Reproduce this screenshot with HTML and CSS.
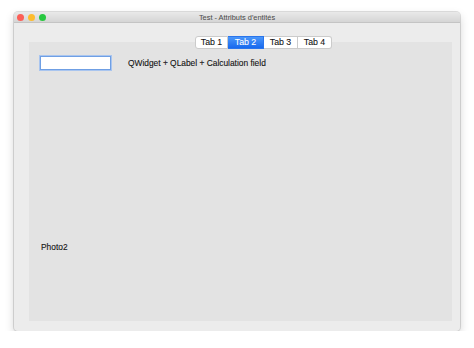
FILE: index.html
```html
<!DOCTYPE html>
<html lang="fr">
<head>
    <meta charset="UTF-8">
    <title>Test - Attributs d'entités</title>
    <link rel="stylesheet" href="styles.css">
</head>
<body>
    <div class="window">
        <div class="titlebar">
            <div class="lights">
                <span class="light red"></span>
                <span class="light yellow"></span>
                <span class="light green"></span>
            </div>
            <div class="title">Test - Attributs d'entités</div>
        </div>

        <div class="content">
            <div class="tabs">
                <button class="tab first">Tab 1</button>
                <button class="tab active">Tab 2</button>
                <button class="tab">Tab 3</button>
                <button class="tab last">Tab 4</button>
            </div>
            <div class="pane">
                <div class="row">
                    <input type="text" class="field">
                    <span class="label">QWidget + QLabel + Calculation field</span>
                </div>
                <div class="photo">Photo2</div>
            </div>
        </div>
    </div>
</body>
</html>
```

FILE: styles.css
```css
body {
    margin: 0;
    background: #ffffff;
    font-family: "Liberation Sans", Arial, sans-serif;
    color: #111111;
}
.window {
    margin: 12px 0 0 14px;
    width: 446px;
    height: 319px;
    background: #ececec;
    border-radius: 4px;
    box-shadow: 0 0 0 1px rgba(0,0,0,0.12), 0 4px 10px rgba(0,0,0,0.18);
    display: flex;
    flex-direction: column;
    overflow: hidden;
}
.titlebar {
    position: relative;
    height: 10px;
    background: linear-gradient(#e9e9e9, #d5d5d5);
    border-bottom: 1px solid #c4c4c4;
    display: flex;
    align-items: center;
    justify-content: center;
}
.lights {
    position: absolute;
    left: 3px;
    top: 0;
    bottom: 0;
    display: flex;
    align-items: center;
    gap: 4px;
}
.light {
    width: 7px;
    height: 7px;
    border-radius: 50%;
}
.red { background: #fc5f57; }
.yellow { background: #fdbc2e; }
.green { background: #28c840; }
.title {
    font-size: 7.4px;
    color: #4d4d4d;
    -webkit-text-stroke: 0.05px #4d4d4d;
}
.content {
    flex: 1;
    display: flex;
    flex-direction: column;
    padding: 13px 8px 10px 15px;
}
.tabs {
    display: flex;
    padding-left: 166px;
    position: relative;
    z-index: 1;
}
.tab {
    width: 34px;
    height: 13px;
    padding: 0;
    border: 1px solid #cbcbcb;
    border-left: none;
    background: #ffffff;
    font-family: inherit;
    font-size: 8.8px;
    color: #111;
    line-height: 11px;
    -webkit-text-stroke: 0.08px #111;
}
.tab.first {
    width: 33px;
    border-left: 1px solid #cbcbcb;
    border-radius: 3px 0 0 3px;
}
.tab.last {
    border-radius: 0 3px 3px 0;
}
.tab.active {
    width: 36px;
    background: linear-gradient(#4a97fa, #1869ee);
    border-color: #2a75ec;
    color: #ffffff;
    -webkit-text-stroke: 0.08px #ffffff;
}
.pane {
    flex: 1;
    margin-top: -7px;
    background: #e3e3e3;
    padding: 14px 11px;
}
.row {
    display: flex;
    align-items: center;
    gap: 17px;
}
.field {
    width: 71px;
    height: 14px;
    box-sizing: border-box;
    margin: 0;
    border: 1px solid #6f9fe4;
    box-shadow: 0 0 0 1px #a9c5ef;
    background: #ffffff;
    padding: 0;
}
.label {
    font-size: 8.4px;
    line-height: 10px;
    margin-top: -1px;
    -webkit-text-stroke: 0.1px #111;
}
.photo {
    margin-top: 172px;
    padding-left: 1px;
    font-size: 8.4px;
    line-height: 10px;
    -webkit-text-stroke: 0.1px #111;
}
```
